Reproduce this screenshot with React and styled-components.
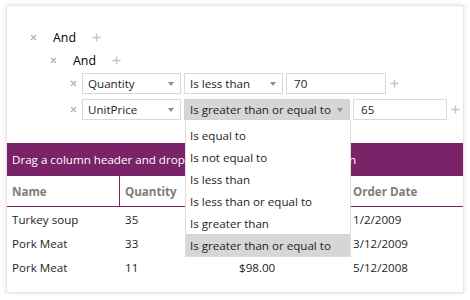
import React from "react";
import styled, { createGlobalStyle, css } from "styled-components";

const purple = "#7b2368";
const fs = "11.6px";

const GlobalStyle = createGlobalStyle`
  html, body {
    margin: 0;
    padding: 0;
    background: #fff;
  }
  body {
    font-family: "Open Sans", "Noto Sans", Arial, sans-serif;
    font-size: ${fs};
    color: #1e1e1e;
  }
`;

const Page = styled.div`
  width: 470px;
  height: 300px;
  padding: 5px 6px 0 6px;
  box-sizing: border-box;
`;

const Card = styled.div`
  width: 458px;
  height: 288px;
  box-sizing: border-box;
  border: 1px solid #e6e6e6;
  box-shadow: 0 0 4px rgba(0, 0, 0, 0.12);
  background: #fff;
  display: flex;
  flex-direction: column;
`;

const FilterPanel = styled.div`
  padding: 21px 0 0 17px;
  display: flex;
  flex-direction: column;
  gap: 2px;
`;

const Row = styled.div`
  display: flex;
  align-items: center;
  height: 21px;
  padding-left: ${(p) => p.$level * 20}px;
  margin-top: ${(p) => p.$extra || 0}px;
`;

const IconBtn = styled.span`
  display: inline-flex;
  align-items: center;
  justify-content: center;
  flex: none;
  width: ${(p) => p.$w}px;
  height: 21px;
`;

const Logic = styled.span`
  font-size: 12.4px;
  color: #000;
  margin: 0 15px 0 11px;
`;

const Combo = styled.div`
  position: relative;
  box-sizing: border-box;
  width: ${(p) => p.$w}px;
  height: 21px;
  margin-right: 3px;
  padding: 0 0 0 5px;
  display: flex;
  align-items: center;
  justify-content: space-between;
  border: 1px solid ${(p) => (p.$open ? "#d2d2d2" : "#d9d9d9")};
  background: ${(p) => (p.$open ? "#d6d6d6" : "#fff")};
  font-size: ${fs};
  color: #1e1e1e;
  white-space: nowrap;
`;

const Arrow = styled.span`
  width: 0;
  height: 0;
  margin-right: 6px;
  border-left: 3.5px solid transparent;
  border-right: 3.5px solid transparent;
  border-top: 4px solid #8f8f8f;
`;

const ValueBox = styled.div`
  box-sizing: border-box;
  width: ${(p) => p.$w}px;
  height: 21px;
  margin-right: 3px;
  padding-left: 7px;
  display: flex;
  align-items: center;
  border: 1px solid #d9d9d9;
  font-size: ${fs};
  color: #1e1e1e;
`;

const DropList = styled.ul`
  position: absolute;
  left: 0;
  top: 20px;
  width: 166px;
  box-sizing: border-box;
  margin: 0;
  padding: 4px 0 0 0;
  list-style: none;
  background: #fff;
  border: 1px solid #dcdcdc;
  border-top: none;
  z-index: 10;
`;

const DropItem = styled.li`
  height: 22px;
  display: flex;
  align-items: center;
  padding-left: 4px;
  font-size: ${fs};
  color: #1e1e1e;
  ${(p) =>
    p.$selected &&
    css`
      background: #d6d6d6;
    `}
`;

const Grid = styled.div`
  margin-top: 23px;
  display: flex;
  flex-direction: column;
`;

const GroupPanel = styled.div`
  height: 33px;
  background: ${purple};
  color: #fff;
  font-size: ${fs};
  display: flex;
  align-items: center;
  padding-left: 5px;
  white-space: nowrap;
  overflow: hidden;
`;

const Cols = styled.div`
  display: grid;
  grid-template-columns: 113px 114px 114px 1fr;
`;

const HeaderRow = styled(Cols)`
  height: 30px;
  border-bottom: 1px solid ${purple};
`;

const HeaderCell = styled.div`
  display: flex;
  align-items: center;
  padding-left: 5px;
  font-size: ${fs};
  font-weight: 700;
  color: #7d7d7d;
  border-right: ${(p) => (p.$last ? "none" : `1px solid ${purple}`)};
`;

const DataRow = styled(Cols)`
  height: 24px;
  &:first-of-type {
    margin-top: 1px;
  }
`;

const Cell = styled.div`
  display: flex;
  align-items: center;
  padding-left: 5px;
  font-size: ${fs};
  color: #1e1e1e;
`;

function RemoveIcon() {
  return (
    <IconBtn $w={18}>
      <svg width="7" height="7" viewBox="0 0 7 7">
        <path d="M1 1 L6 6 M6 1 L1 6" stroke="#b4b4b4" strokeWidth="1.4" />
      </svg>
    </IconBtn>
  );
}

function AddIcon() {
  return (
    <IconBtn $w={10}>
      <svg width="9" height="9" viewBox="0 0 9 9">
        <path d="M4.5 0.5 V8.5 M0.5 4.5 H8.5" stroke="#c4c4c4" strokeWidth="1.4" />
      </svg>
    </IconBtn>
  );
}

const operators = [
  "Is equal to",
  "Is not equal to",
  "Is less than",
  "Is less than or equal to",
  "Is greater than",
  "Is greater than or equal to",
];

const rows = [
  ["Turkey soup", "35", "$9.80", "1/2/2009"],
  ["Pork Meat", "33", "$98.00", "3/12/2009"],
  ["Pork Meat", "11", "$98.00", "5/12/2008"],
];

export default function App() {
  return (
    <Page>
      <GlobalStyle />
      <Card>
        <FilterPanel>
          <Row $level={0}>
            <RemoveIcon />
            <Logic>And</Logic>
            <AddIcon />
          </Row>
          <Row $level={1}>
            <RemoveIcon />
            <Logic>And</Logic>
            <AddIcon />
          </Row>
          <Row $level={2}>
            <RemoveIcon />
            <Combo $w={99}>
              Quantity
              <Arrow />
            </Combo>
            <Combo $w={99}>
              Is less than
              <Arrow />
            </Combo>
            <ValueBox $w={100}>70</ValueBox>
            <AddIcon />
          </Row>
          <Row $level={2} $extra={3}>
            <RemoveIcon />
            <Combo $w={99}>
              UnitPrice
              <Arrow />
            </Combo>
            <Combo $w={166} $open>
              Is greater than or equal to
              <Arrow />
              <DropList>
                {operators.map((op, i) => (
                  <DropItem key={op} $selected={i === operators.length - 1}>
                    {op}
                  </DropItem>
                ))}
              </DropList>
            </Combo>
            <ValueBox $w={94}>65</ValueBox>
            <AddIcon />
          </Row>
        </FilterPanel>

        <Grid>
          <GroupPanel>Drag a column header and drop it here to group by that column</GroupPanel>
          <HeaderRow>
            <HeaderCell>Name</HeaderCell>
            <HeaderCell>Quantity</HeaderCell>
            <HeaderCell>Unit Price</HeaderCell>
            <HeaderCell $last>Order Date</HeaderCell>
          </HeaderRow>
          {rows.map((r, i) => (
            <DataRow key={i}>
              {r.map((c, j) => (
                <Cell key={j}>{c}</Cell>
              ))}
            </DataRow>
          ))}
        </Grid>
      </Card>
    </Page>
  );
}
